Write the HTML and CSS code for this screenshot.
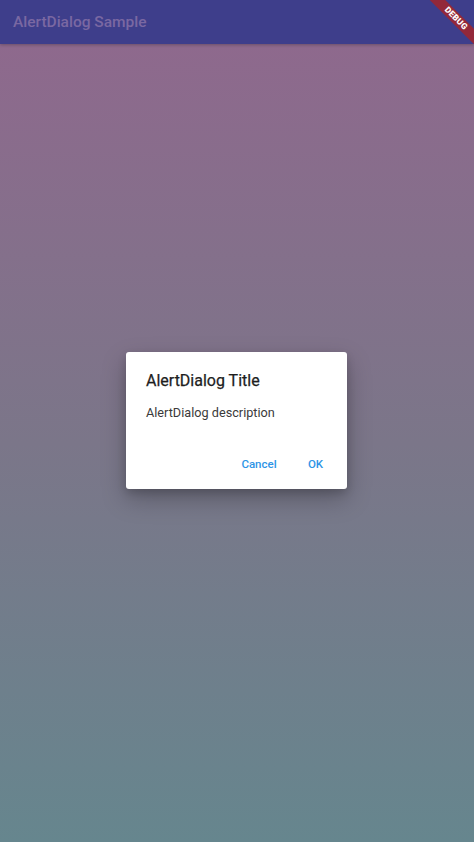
FILE: index.html
```html
<!DOCTYPE html>
<html lang="en">
<head>
  <meta charset="UTF-8">
  <title>AlertDialog Sample</title>
  <link rel="stylesheet" href="styles.css">
</head>
<body>

<div class="app">
  <header class="appbar">
    <h1>AlertDialog Sample</h1>
  </header>

  <main class="content"></main>

  <!-- dialog sits over the whole screen, centered -->
  <div class="overlay">
    <div class="dialog">
      <h2>AlertDialog Title</h2>
      <p>AlertDialog description</p>
      <div class="actions">
        <button class="btn btn-cancel">Cancel</button>
        <button class="btn btn-ok">OK</button>
      </div>
    </div>
  </div>

  <div class="debug"><span>DEBUG</span></div>
</div>

</body>
</html>
```

FILE: styles.css
```css
html, body {
  margin: 0;
  padding: 0;
  height: 100%;
}

body {
  font-family: Roboto, "Noto Sans", sans-serif;
}

.app {
  position: relative;
  width: 474px;
  height: 842px;
  overflow: hidden;
  display: flex;
  flex-direction: column;
}

.appbar {
  height: 44px;
  background: #3e3e8b;
  display: flex;
  align-items: center;
  padding-left: 13px;
  box-shadow: 0 1px 3px rgba(0, 0, 0, 0.25);
  position: relative;
  z-index: 1;
}

.appbar h1 {
  margin: 0;
  font-size: 15.5px;
  font-weight: 500;
  color: #7a68a2;
}

.content {
  flex: 1;
  background: linear-gradient(to bottom, #8e698d 0%, #7b7689 50%, #66868e 100%);
}

.overlay {
  position: absolute;
  inset: 0;
  display: flex;
  align-items: center;
  justify-content: center;
  z-index: 2;
}

.dialog {
  width: 221px;
  height: 137px;
  margin: -2px 0 0 -1px;
  background: #fff;
  border-radius: 3px;
  box-shadow: 0 10px 24px rgba(0, 0, 0, 0.25), 0 4px 8px rgba(0, 0, 0, 0.15);
  box-sizing: border-box;
  padding: 19px 20px 0 20px;
  display: flex;
  flex-direction: column;
}

.dialog h2 {
  margin: 0;
  font-size: 16px;
  font-weight: 400;
  color: #1e1e1e;
  line-height: 20px;
  -webkit-text-stroke: 0.25px #1e1e1e;
}

.dialog p {
  margin: 13px 0 0 0;
  font-size: 12.7px;
  color: #3a3a3a;
  line-height: 18px;
}

.actions {
  display: flex;
  justify-content: flex-end;
  margin-top: 31px;
  margin-right: -12.5px;
}

.btn {
  background: none;
  border: none;
  font-family: Roboto, sans-serif;
  font-size: 11.5px;
  font-weight: 500;
  color: #2f95e6;
  padding: 4px 0;
  text-align: center;
  cursor: pointer;
}

.btn-cancel {
  width: 65px;
}

.btn-ok {
  width: 48px;
}

.debug {
  position: absolute;
  top: 0;
  right: 0;
  width: 74px;
  height: 74px;
  overflow: hidden;
  z-index: 3;
  pointer-events: none;
}

.debug span {
  position: absolute;
  top: 13px;
  right: -32px;
  width: 100px;
  height: 11px;
  background: #93283a;
  color: #fff;
  font-size: 8.5px;
  font-weight: 900;
  line-height: 11px;
  text-align: center;
  transform: rotate(45deg);
  letter-spacing: 0.2px;
}
```
